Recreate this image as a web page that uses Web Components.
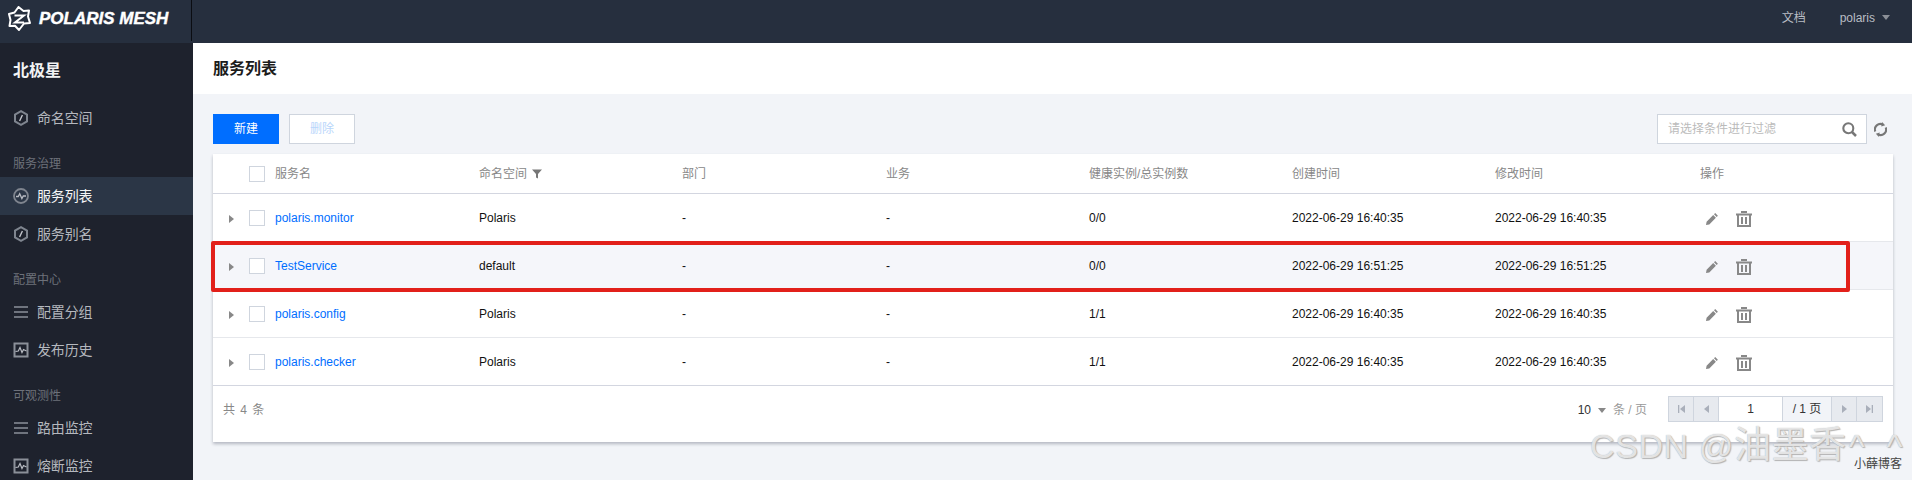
<!doctype html>
<html lang="zh">
<head>
<meta charset="utf-8">
<title>服务列表</title>
<style>
html,body{margin:0;height:480px;overflow:hidden;background:#f2f4f8}
body{font:12px/18px "Liberation Sans","Noto Sans CJK SC",sans-serif;color:#000}
</style>
</head>
<body>
<pm-app>
  <pm-header slot="header"></pm-header>
  <pm-sidebar slot="side">
    <pm-nav-item icon="hex">命名空间</pm-nav-item>
    <pm-nav-group>服务治理</pm-nav-group>
    <pm-nav-item icon="pulse" active>服务列表</pm-nav-item>
    <pm-nav-item icon="hex">服务别名</pm-nav-item>
    <pm-nav-group>配置中心</pm-nav-group>
    <pm-nav-item icon="menu">配置分组</pm-nav-item>
    <pm-nav-item icon="chart">发布历史</pm-nav-item>
    <pm-nav-group>可观测性</pm-nav-group>
    <pm-nav-item icon="menu">路由监控</pm-nav-item>
    <pm-nav-item icon="chart">熔断监控</pm-nav-item>
  </pm-sidebar>
  <pm-page>
    <pm-btn primary slot="actions">新建</pm-btn>
    <pm-btn slot="actions">删除</pm-btn>
    <pm-search slot="tools"></pm-search>
    <pm-card slot="table">
      <pm-head></pm-head>
      <pm-row name="polaris.monitor" ns="Polaris" health="0/0" time="2022-06-29 16:40:35"></pm-row>
      <pm-row name="TestService" ns="default" health="0/0" time="2022-06-29 16:51:25" marked></pm-row>
      <pm-row name="polaris.config" ns="Polaris" health="1/1" time="2022-06-29 16:40:35"></pm-row>
      <pm-row name="polaris.checker" ns="Polaris" health="1/1" time="2022-06-29 16:40:35" last></pm-row>
      <pm-foot></pm-foot>
    </pm-card>
  </pm-page>
  <pm-watermark slot="over"></pm-watermark>
</pm-app>

<script>
const define = (name, html) =>
    customElements.define(name, class extends HTMLElement {
        constructor() {
            super().attachShadow({ mode: "open" }).innerHTML = html;
        }
    });

// sidebar icons, drawn on a 14x14 box, the round and tall ones spill over a little
const navIcons = {
    hex: `<polygon points="7,.2 13,3.500 13,10.500 7,13.800 1,10.500 1,3.500" fill="none" stroke="#7f858f" stroke-width="2"/><path d="M5.600 10L8.400 4" stroke="#c3c6cc" stroke-width="1.400"/>`,
    pulse: `<circle cx="7" cy="7" r="7" fill="none" stroke="#7f858f" stroke-width="1.800"/><path d="M2 7.500H4.300L5.700 4.800 7.900 9.500 9.300 7H12" fill="none" stroke="#b9bcc3" stroke-width="1.300"/>`,
    menu: `<path d="M0 2H14M0 7H14M0 12H14" stroke="#8b9099" stroke-width="1.500"/>`,
    chart: `<rect x=".5" y=".5" width="13" height="13" fill="none" stroke="#8b9099" stroke-width="2"/><path d="M1.500 8.500L4.300 8 6 4.500 8 9.500 9.500 6.500 12.500 8" fill="none" stroke="#b9bcc3" stroke-width="1.200"/>`,
};

define("pm-app", `<style>
:host{display:grid;grid-template-columns:193px 1fr;grid-template-rows:43px 437px;height:480px;position:relative;overflow:hidden}
.h{grid-column:1/3}
</style>
<div class="h"><slot name="header"></slot></div>
<slot name="side"></slot>
<slot></slot>
<slot name="over"></slot>`);

define("pm-header", `<style>
:host{display:flex;align-items:flex-start;height:43px;background:#262f3e;color:#b9bdc4}
.logo{box-sizing:border-box;width:192px;height:41px;border-right:1px solid #0b0d12;padding:6px 0 0 8px;display:flex;gap:8px}
.word{font:italic 700 17px/25px "Liberation Sans",sans-serif;color:#fff;white-space:nowrap;-webkit-text-stroke:.4px #fff}
.right{margin-left:auto;display:flex;padding:9px 22px 0 0;line-height:18px}
.docs{margin-right:34px}
.tri{width:0;height:0;margin:6px 0 0 7px;border:4px solid transparent;border-top:5px solid #8b8f97;border-bottom:0}
</style>
<div class="logo">
  <svg width="23" height="25" viewBox="0 0 23 25"><path d="M10.500 1L15.500 5 21 4.500 20 10.500 22 17 16 17.500 11 24 7 19.800 1.500 20 2.500 14 1 8 6.500 6.500Z" fill="none" stroke="#fff" stroke-width="2" stroke-linejoin="round"/><path d="M6.500 9.500H16L7 16.500H16" fill="none" stroke="#fff" stroke-width="2"/></svg>
  <span class="word">POLARIS MESH</span>
</div>
<div class="right"><span class="docs">文档</span><span>polaris</span><i class="tri"></i></div>`);

define("pm-sidebar", `<style>
:host{display:block;background:#1e222d;height:437px;overflow:hidden}
h1{margin:0;height:56px;padding-left:13px;font:700 16px/56px "Liberation Sans","Noto Sans CJK SC",sans-serif;color:#f2f3f4}
</style>
<h1>北极星</h1>
<slot></slot>`);

customElements.define("pm-nav-item", class extends HTMLElement {
    constructor() {
        super().attachShadow({ mode: "open" }).innerHTML = `<style>
:host{display:flex;align-items:center;height:38px;padding-left:14px;font-size:14px;color:#b5b8be;letter-spacing:-.15px}
:host([active]){background:#2b3646;color:#f4f5f6}
svg{margin-right:9px;flex:none;overflow:visible}
</style>
<svg width="14" height="14" viewBox="0 0 14 14">${navIcons[this.getAttribute("icon")]}</svg><slot></slot>`;
    }
});

define("pm-nav-group", `<style>
:host{display:block;box-sizing:border-box;height:40px;padding:18px 0 0 13px;font-size:12px;line-height:18px;color:#6d717a}
</style><slot></slot>`);

define("pm-page", `<style>
:host{display:block;height:437px;overflow:hidden}
.title{height:51px;background:#fff;padding-left:20px;font:700 16px/51px "Liberation Sans","Noto Sans CJK SC",sans-serif;color:#1c1c1c}
.body{padding:20px 19px 0 20px}
.bar{display:flex;justify-content:space-between;margin-bottom:10px}
.left{display:flex;gap:10px}
</style>
<div class="title">服务列表</div>
<div class="body">
  <div class="bar">
    <div class="left"><slot name="actions"></slot></div>
    <slot name="tools"></slot>
  </div>
  <slot name="table"></slot>
</div>`);

define("pm-btn", `<style>
:host{display:block;box-sizing:border-box;width:66px;height:30px;border:1px solid #cfd5de;background:#fff;color:#b9d6fb;text-align:center;line-height:28px}
:host([primary]){background:#006eff;border-color:#006eff;color:#fff}
</style><slot></slot>`);

define("pm-search", `<style>
:host{display:flex;align-items:center}
.box{box-sizing:border-box;width:210px;height:30px;border:1px solid #cfd5de;background:#fff;display:flex;align-items:center;justify-content:space-between;padding:0 9px 0 10px;color:#bbb}
.refresh{margin:0 6px 0 7px}
</style>
<div class="box">请选择条件进行过滤
  <svg width="15" height="15" viewBox="0 0 15 15"><circle cx="6.300" cy="6.300" r="5" fill="none" stroke="#777" stroke-width="2.100"/><path d="M10 10L14 14" stroke="#777" stroke-width="2.500"/></svg>
</div>
<svg class="refresh" width="13" height="15" viewBox="0 0 13 15"><path d="M1.300 9.500A5.500 5.500 0 0 1 9 2.600M11.700 5.500A5.500 5.500 0 0 1 4 12.400" fill="none" stroke="#777" stroke-width="2.100"/><path d="M8 0L11.200 3.300 7.300 4.500ZM5 15L1.800 11.700 5.700 10.500Z" fill="#777"/></svg>`);

define("pm-card", `<style>
:host{display:block;background:#fff;box-shadow:0 2px 3px rgba(54,58,80,.32);
  --cols:62px 204px 203px 204px 203px 203px 203px 205px 1fr}
</style><slot></slot>`);

define("pm-check", `<style>
:host{display:block;box-sizing:border-box;width:16px;height:16px;border:1px solid #cfd5de;background:#fff}
</style>`);

define("pm-head", `<style>
:host{display:grid;grid-template-columns:var(--cols);align-items:center;height:40px;box-sizing:border-box;border-bottom:1px solid #d3d6e0;color:#888}
.c{display:flex;justify-content:flex-end;padding-right:10px}
svg{margin-left:5px}
span{display:flex;align-items:center;padding-top:1px}
</style>
<div class="c"><pm-check></pm-check></div>
<span>服务名</span>
<span>命名空间<svg width="10" height="10" viewBox="0 0 10 10"><path d="M0 .5H10L6 5V9.500L4 8.500V5Z" fill="#777"/></svg></span>
<span>部门</span><span>业务</span><span>健康实例/总实例数</span><span>创建时间</span><span>修改时间</span><span>操作</span>`);

customElements.define("pm-row", class extends HTMLElement {
    constructor() {
        super().attachShadow({ mode: "open" }).innerHTML = `<style>
:host{display:grid;grid-template-columns:var(--cols);align-items:center;height:48px;box-sizing:border-box;border-bottom:1px solid #e6e8ec;position:relative;color:#111}
:host([last]){border-bottom-color:#d3d6e0}
:host([marked]){background:#f5f6fa}
:host([marked])::after{content:"";position:absolute;top:-1px;left:-2px;right:43px;bottom:-3px;border:4px solid #e2201a;border-radius:2px}
.c{display:flex;justify-content:flex-end;align-items:center;padding-right:10px}
.tri{width:0;height:0;margin-right:15px;margin-top:2px;border:4px solid transparent;border-left:5px solid #888;border-right:0}
a{color:#006eff;text-decoration:none}
.ops{display:flex;align-items:center;padding:2px 0 0 6px;gap:18px}
</style>
<div class="c"><i class="tri"></i><pm-check></pm-check></div>
<a>${this.getAttribute("name")}</a>
<span>${this.getAttribute("ns")}</span>
<span>-</span><span>-</span>
<span>${this.getAttribute("health")}</span>
<span>${this.getAttribute("time")}</span>
<span>${this.getAttribute("time")}</span>
<div class="ops">
  <svg width="12" height="12" viewBox="0 0 12 12"><path d="M0 12L.6 8.700 7.200 2.100 9.900 4.800 3.300 11.400ZM8 1.300L9.200 .1 11.900 2.800 10.700 4Z" fill="#888"/></svg>
  <svg width="16" height="16" viewBox="0 0 16 16"><path d="M5 1H11M0 3.500H16M2 3.500V15H14V3.500M6 6V13M10 6V13" fill="none" stroke="#888" stroke-width="2"/></svg>
</div>`;
    }
});

define("pm-foot", `<style>
:host{display:flex;justify-content:space-between;align-items:flex-start;height:56px;box-sizing:border-box;padding:10px 10px 0 10px;color:#888}
.total{line-height:28px;letter-spacing:1px}
.right{display:flex;align-items:center;height:26px}
.num{color:#333;padding-top:1px}
.tri{width:0;height:0;margin:3px 7px 0 7px;border:4px solid transparent;border-top:5px solid #888;border-bottom:0}
.unit{color:#999;margin-right:21px;padding-top:1px}
</style>
<span class="total">共 4 条</span>
<div class="right"><span class="num">10</span><i class="tri"></i><span class="unit">条 / 页</span><pm-pager></pm-pager></div>`);

define("pm-pager", `<style>
:host{display:flex;height:26px;box-sizing:border-box;border:1px solid #cfd5de;color:#333}
.b{width:25px;box-sizing:border-box;background:#e7eaef;border-right:1px solid #cfd5de;display:flex;align-items:center;justify-content:center}
.b:last-child{border-right:0}
.in{width:63px;background:#fff;border-right:1px solid #cfd5de;text-align:center;line-height:24px}
.t{width:49px;box-sizing:border-box;background:#f2f4f8;border-right:1px solid #cfd5de;text-align:center;line-height:24px}
</style>
<div class="b"><svg width="7" height="8" viewBox="0 0 7 8"><path d="M0 0H1.300V8H0ZM7 0V8L2 4Z" fill="#a9afba"/></svg></div>
<div class="b"><svg width="5" height="8" viewBox="0 0 5 8"><path d="M5 0V8L0 4Z" fill="#a9afba"/></svg></div>
<div class="in">1</div>
<div class="t">/ 1 页</div>
<div class="b"><svg width="5" height="8" viewBox="0 0 5 8"><path d="M0 0V8L5 4Z" fill="#a9afba"/></svg></div>
<div class="b"><svg width="7" height="8" viewBox="0 0 7 8"><path d="M0 0V8L5 4ZM5.700 0H7V8H5.700Z" fill="#a9afba"/></svg></div>`);

define("pm-watermark", `<style>
:host{position:absolute;left:1590px;top:423px;white-space:nowrap;pointer-events:none}
.big{font:34px/46px "Liberation Sans","Noto Sans CJK SC",sans-serif;color:rgba(255,255,255,.7);letter-spacing:.6px;text-shadow:0 0 1px #a5a5a5,1px 1px 1px #b5b5b5}
.cjk{font-size:37px}
.sm{letter-spacing:1.5px;margin-left:2px}
.small{position:absolute;left:264px;top:32px;font-size:12px;line-height:18px;color:#444}
</style>
<div class="big">CSDN @<span class="cjk">油墨香</span><span class="sm">^_^</span></div>
<div class="small">小薛博客</div>`);
</script>
</body>
</html>
